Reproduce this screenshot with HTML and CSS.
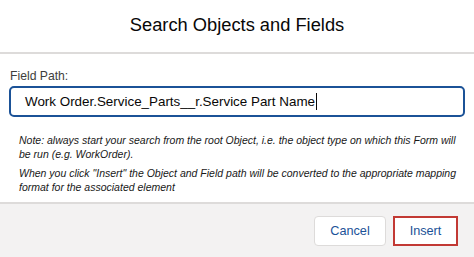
FILE: index.html
```html
<!DOCTYPE html>
<html>
<head>
<meta charset="utf-8">
<link rel="stylesheet" href="styles.css">
</head>
<body>
<div class="modal">
  <header class="modal-header">
    <h2 class="title">Search Objects and Fields</h2>
  </header>
  <section class="modal-body">
    <label class="label">Field Path:</label>
    <div class="input"><span class="value">Work Order.Service_Parts__r.Service Part Name</span><span class="caret"></span></div>
    <p class="note">Note: always start your search from the root Object, i.e. the object type on which this Form will be run (e.g. WorkOrder).</p>
    <p class="note">When you click "Insert" the Object and Field path will be converted to the appropriate mapping format for the associated element</p>
  </section>
  <footer class="modal-footer">
    <button class="btn">Cancel</button>
    <button class="btn btn-insert">Insert</button>
  </footer>
</div>
</body>
</html>
```

FILE: styles.css
```css
html, body {
  margin: 0;
  padding: 0;
  background: #ffffff;
}
body {
  font-family: "Liberation Sans", Arial, sans-serif;
  color: #080707;
  width: 474px;
  height: 257px;
  overflow: hidden;
}
.modal {
  display: flex;
  flex-direction: column;
  height: 257px;
}
.modal-header {
  height: 52px;
  border-bottom: 2px solid #dddbda;
  display: flex;
  align-items: center;
  justify-content: center;
}
.title {
  margin: 0;
  font-size: 18.3px;
  font-weight: normal;
  color: #080707;
  padding-bottom: 2px;
}
.modal-body {
  padding: 14px 9px 0 9px;
  height: 150px;
  box-sizing: border-box;
  border-bottom: 2px solid #dddbda;
}
.label {
  display: block;
  font-size: 12.2px;
  color: #3e3e3c;
  margin-left: 1px;
  line-height: 16px;
}
.input {
  margin-top: 2px;
  height: 31px;
  width: 456px;
  box-sizing: border-box;
  border: 2px solid #1b5297;
  border-radius: 5px;
  display: flex;
  align-items: center;
  padding-left: 14px;
  font-size: 13.4px;
  color: #080707;
}
.caret {
  display: inline-block;
  width: 1px;
  height: 17px;
  background: #080707;
  margin-left: 1px;
}
.note {
  margin: 16px 0 0 10px;
  font-size: 10.5px;
  font-style: italic;
  line-height: 14px;
  color: #181818;
}
.note + .note {
  margin-top: 5px;
}
.modal-footer {
  flex: 1;
  background: #f3f2f2;
  display: flex;
  justify-content: flex-end;
  align-items: flex-start;
  padding: 12px 16px 0 0;
  gap: 7px;
}
.btn {
  height: 30px;
  box-sizing: border-box;
  border: 1px solid #dddbda;
  background: #ffffff;
  border-radius: 4px;
  font-family: "Liberation Sans", Arial, sans-serif;
  font-size: 12.7px;
  color: #1b5297;
  padding: 0;
  width: 72px;
}
.btn-insert {
  width: 65px;
  border: 2px solid #c23934;
  border-radius: 0;
}
```
